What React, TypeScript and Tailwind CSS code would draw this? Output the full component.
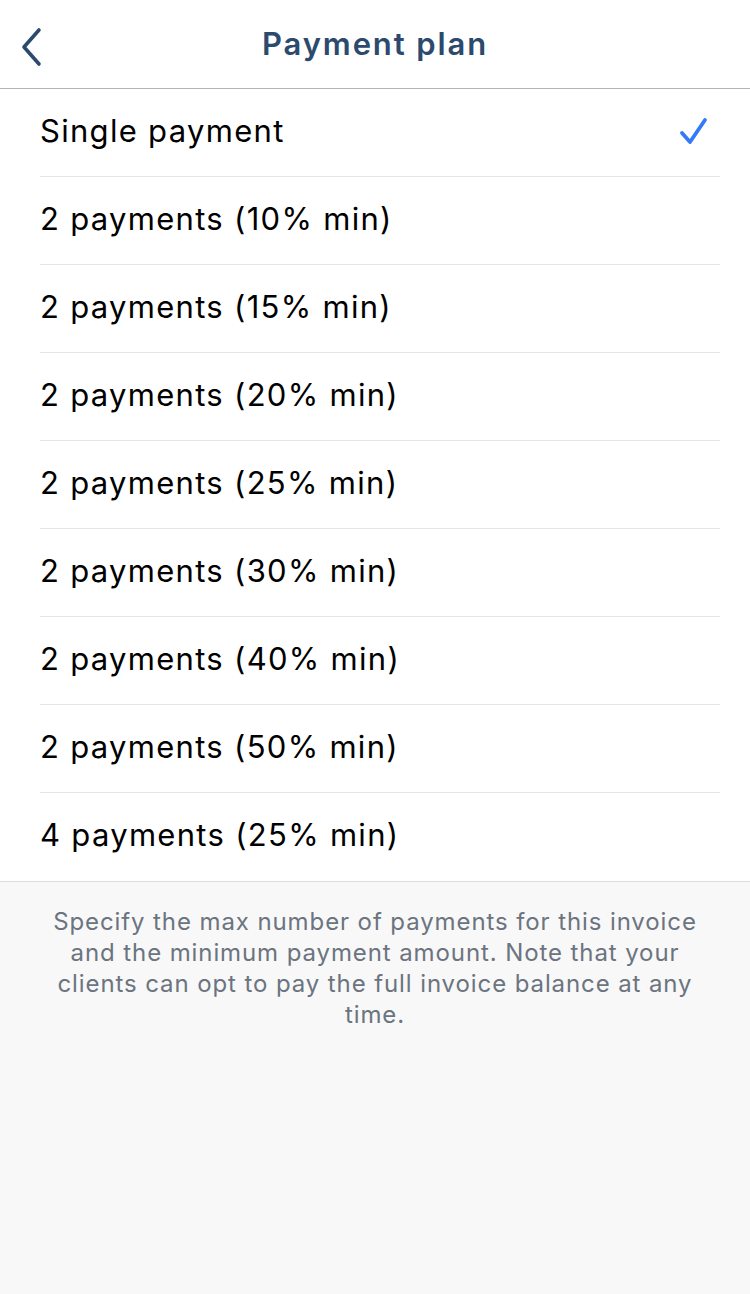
const options = [
  "Single payment",
  "2 payments (10% min)",
  "2 payments (15% min)",
  "2 payments (20% min)",
  "2 payments (25% min)",
  "2 payments (30% min)",
  "2 payments (40% min)",
  "2 payments (50% min)",
  "4 payments (25% min)",
];

export default function App() {
  const selected = 0;
  return (
    <div className="flex min-h-[1294px] w-[750px] flex-col bg-[#f8f8f8] font-['Inter',sans-serif]">
      {/* header */}
      <div className="relative flex h-[89px] items-center justify-center border-b border-[#b4b4b4] bg-white">
        <button className="absolute left-[14px] top-[22px] p-1">
          <svg width="26" height="42" viewBox="0 0 26 42" fill="none">
            <path d="M21 4 L6 21 L21 38" stroke="#2c4a6e" strokeWidth="3.6" strokeLinecap="round" strokeLinejoin="round" />
          </svg>
        </button>
        <h1 className="text-[31px] font-semibold tracking-[1.9px] text-[#2c4a6e]">Payment plan</h1>
      </div>

      {/* options */}
      <div className="border-b border-[#d9dee1] bg-white">
        {options.map((label, i) => (
          <div key={label} className="pl-[40px] pr-[30px]">
            <div
              className={
                "flex h-[88px] items-center justify-between " +
                (i < options.length - 1 ? "border-b border-[#e3e6e8]" : "")
              }
            >
              <span className="-mt-[3px] text-[31px] tracking-[1.3px] text-black">{label}</span>
              {i === selected && (
                <svg width="34" height="34" viewBox="0 0 34 34" fill="none" className="mr-[7px]">
                  <path d="M3 17 L11 26 L26 4" stroke="#3479f6" strokeWidth="3.8" strokeLinecap="round" strokeLinejoin="round" />
                </svg>
              )}
            </div>
          </div>
        ))}
      </div>

      {/* footnote */}
      <p className="px-[50px] pt-[24px] text-center text-[24px] leading-[31px] tracking-[0.9px] text-[#6b747f]">
        Specify the max number of payments for this invoice and the minimum payment amount. Note that your clients can opt to pay the full invoice balance at any time.
      </p>
    </div>
  );
}
